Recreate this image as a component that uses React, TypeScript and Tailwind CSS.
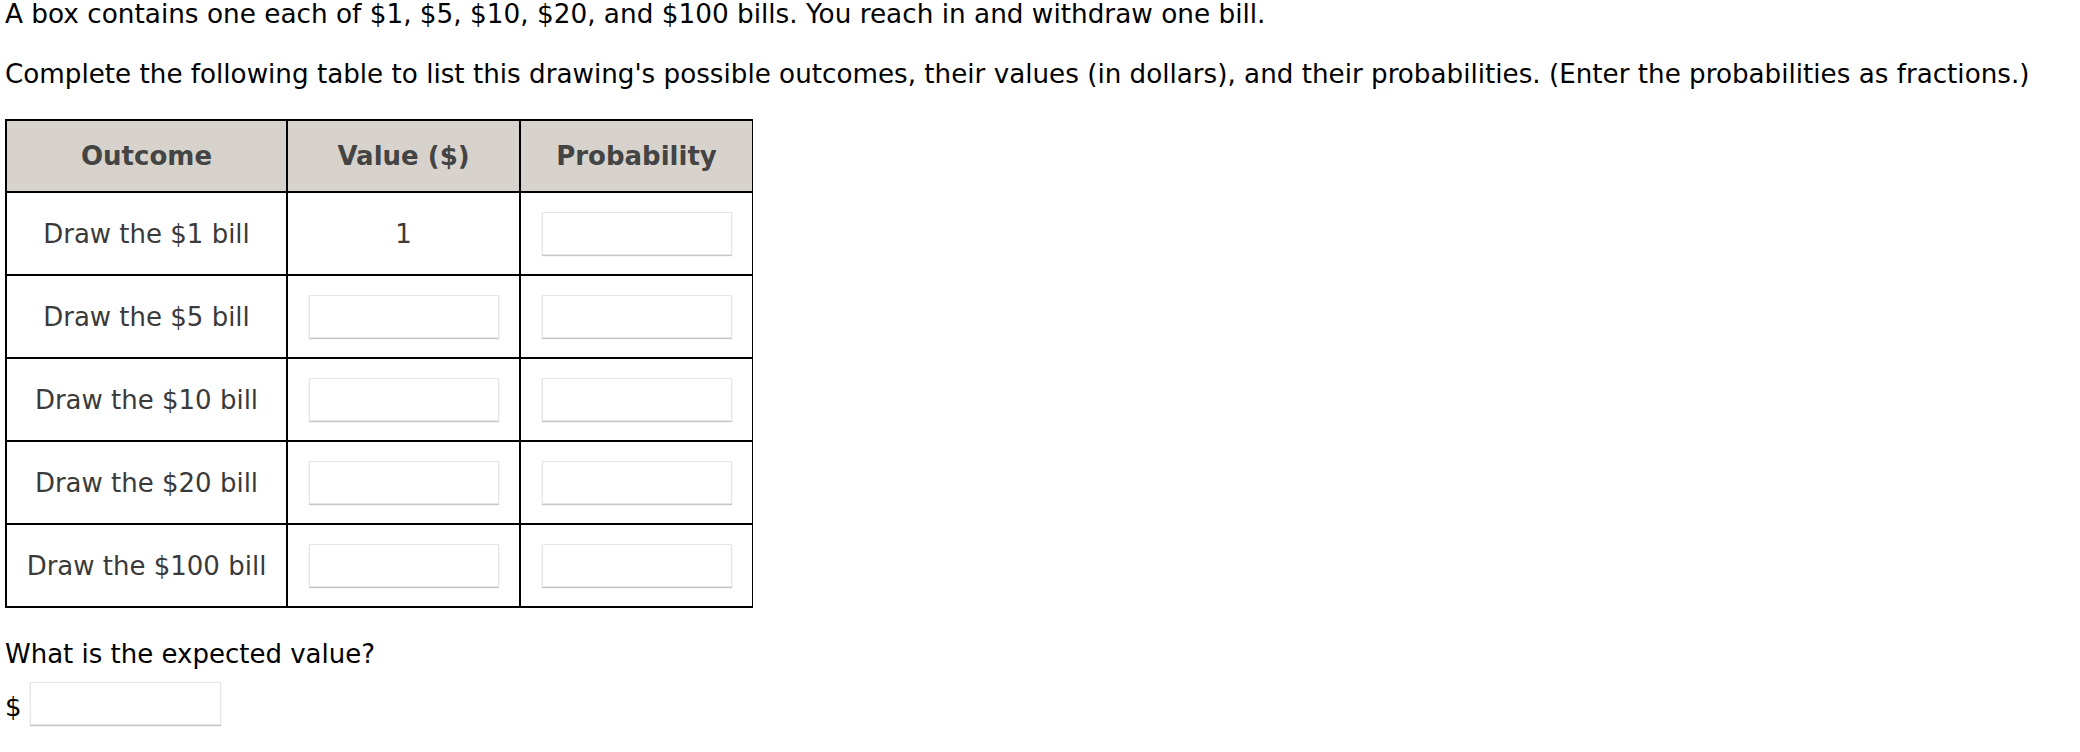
import React from "react";

const font = { fontFamily: '"DejaVu Sans", Verdana, sans-serif' };

function Box({ w = "w-[190px]" }: { w?: string }) {
  return (
    <div
      className={`${w} h-[43px] bg-white border border-[#e6e6e6] shadow-[0_1px_1px_rgba(0,0,0,0.22)]`}
    />
  );
}

const rows = [
  { label: "Draw the $1 bill", value: "1" },
  { label: "Draw the $5 bill" },
  { label: "Draw the $10 bill" },
  { label: "Draw the $20 bill" },
  { label: "Draw the $100 bill" },
];

export default function App() {
  return (
    <div className="min-h-[752px] w-[2080px] bg-white pl-[5px] text-[26px] leading-[30px] text-black" style={font}>
      <p className="-mt-[1px] text-[26.3px]">
        A box contains one each of $1, $5, $10, $20, and $100 bills. You reach in and withdraw one bill.
      </p>
      <p className="mt-[30px] text-[26.2px]">
        Complete the following table to list this drawing's possible outcomes, their values (in dollars), and their probabilities. (Enter the probabilities as fractions.)
      </p>
      <div className="mt-[30px] w-[748px] grid grid-cols-[279px_231px_231px] grid-rows-[70px_81px_81px_81px_81px_81px] gap-[2px] border-2 border-black bg-black">
        <div className="bg-[#d7d3cc] flex items-center justify-center font-bold text-[#444]">Outcome</div>
        <div className="bg-[#d7d3cc] flex items-center justify-center font-bold text-[#444]">Value ($)</div>
        <div className="bg-[#d7d3cc] flex items-center justify-center font-bold text-[#444]">Probability</div>
        {rows.map((r) => (
          <React.Fragment key={r.label}>
            <div className="bg-white flex items-center justify-center text-[#3a3a3a]">{r.label}</div>
            <div className="bg-white flex items-center justify-center text-[#3a3a3a]">
              {r.value ? r.value : <Box />}
            </div>
            <div className="bg-white flex items-center justify-center">
              <Box />
            </div>
          </React.Fragment>
        ))}
      </div>
      <p className="mt-[31px]">What is the expected value?</p>
      <div className="mt-[13px] flex items-center gap-[8px]">
        <span className="pt-[6px]">$</span>
        <Box w="w-[191px]" />
      </div>
    </div>
  );
}
